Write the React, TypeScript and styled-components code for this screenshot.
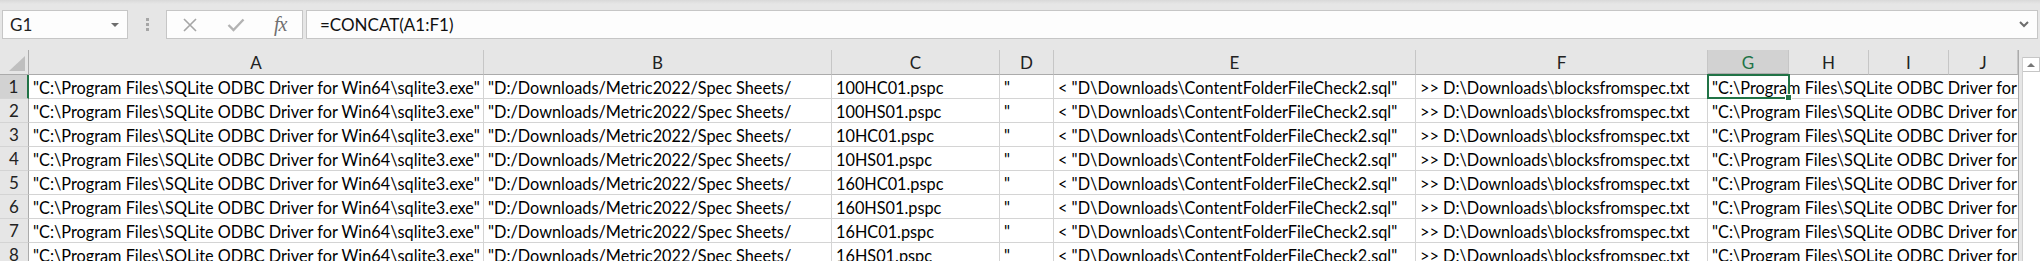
import React from 'react';
import styled, { createGlobalStyle, css } from 'styled-components';

const GlobalStyle = createGlobalStyle`
  html, body {
    margin: 0;
    padding: 0;
    background: #ffffff;
  }
  body {
    font-family: Lato, "Open Sans", "Liberation Sans", sans-serif;
    color: #000;
  }
`;

const FONT = `Lato, "Open Sans", "Liberation Sans", sans-serif`;
const GRID = '#d4d4d4';
const HEADER_LINE = '#ababab';
const HEADER_BG = '#e6e6e6';
const HEADER_SEL = '#d2d2d2';
const GREEN = '#217346';

const Page = styled.div`
  width: 2040px;
  height: 261px;
  overflow: hidden;
  background: ${HEADER_BG};
  font-family: ${FONT};
`;

const FormulaBar = styled.div`
  height: 50px;
  box-sizing: border-box;
  padding: 10px 2px 11px 2px;
  display: flex;
  align-items: stretch;
  background: linear-gradient(to bottom, #d9d9d9 0px, ${HEADER_BG} 4px);
`;

const NameBox = styled.div`
  width: 126px;
  box-sizing: border-box;
  border: 1px solid #c6c6c6;
  background: #fdfdfd;
  display: flex;
  align-items: center;
  justify-content: space-between;
  padding: 0 8px 0 7px;
  font-size: 17px;
  color: #222;
`;

const DropTriangle = styled.span`
  width: 0;
  height: 0;
  border-left: 4px solid transparent;
  border-right: 4px solid transparent;
  border-top: 4px solid #6d6d6d;
`;

const Grip = styled.div`
  width: 38px;
  display: flex;
  flex-direction: column;
  align-items: center;
  justify-content: center;
  gap: 2px;
`;

const GripDot = styled.span`
  width: 3px;
  height: 3px;
  background: #a6a6a6;
`;

const EditButtons = styled.div`
  width: 137px;
  box-sizing: border-box;
  border: 1px solid #c6c6c6;
  background: #fdfdfd;
  display: flex;
  align-items: center;
  padding: 0 0 0 15px;
  gap: 29px;
`;

const FxLabel = styled.span`
  font-family: "Liberation Serif", "DejaVu Serif", serif;
  font-style: italic;
  font-size: 20px;
  color: #707070;
  letter-spacing: -1px;
`;

const FormulaInput = styled.div`
  flex: 1;
  margin-left: 3px;
  box-sizing: border-box;
  border: 1px solid #c6c6c6;
  background: #fdfdfd;
  display: flex;
  align-items: center;
  justify-content: space-between;
  padding: 0 8px 0 13px;
  font-size: 17px;
  color: #111;
`;

const SheetArea = styled.div`
  display: flex;
  align-items: flex-start;
`;

const Sheet = styled.div`
  display: grid;
  grid-template-columns: 29px 455px 348px 168px 54px 362px 292px 81px 80px 80px 69px;
  grid-auto-rows: 24px;
  grid-template-rows: 25px;
  background: #fff;
  border-right: 1px solid ${HEADER_LINE};
`;

const Corner = styled.div`
  background: ${HEADER_BG};
  border-right: 1px solid ${HEADER_LINE};
  border-bottom: 1px solid ${HEADER_LINE};
  box-sizing: border-box;
  display: flex;
  align-items: flex-end;
  justify-content: flex-end;
  padding: 0 3px 3px 0;
`;

const CornerTriangle = styled.span`
  width: 0;
  height: 0;
  border-left: 16px solid transparent;
  border-bottom: 15px solid #bfbfbf;
`;

const ColHeader = styled.div<{ $selected?: boolean }>`
  box-sizing: border-box;
  background: ${HEADER_BG};
  border-right: 1px solid #c6c6c6;
  border-bottom: 1px solid ${HEADER_LINE};
  display: flex;
  align-items: center;
  justify-content: center;
  font-size: 17px;
  color: #222;
  padding-top: 1px;
  ${p =>
    p.$selected &&
    css`
      background: ${HEADER_SEL};
      color: ${GREEN};
      border-bottom: 2px solid ${HEADER_LINE};
    `}
`;

const RowHeader = styled.div<{ $selected?: boolean }>`
  box-sizing: border-box;
  background: ${HEADER_BG};
  border-right: 1px solid ${HEADER_LINE};
  border-bottom: 1px solid ${GRID};
  display: flex;
  align-items: center;
  justify-content: center;
  font-size: 17px;
  color: #222;
  ${p =>
    p.$selected &&
    css`
      background: ${HEADER_SEL};
      border-right: 2px solid ${GREEN};
    `}
`;

const Cell = styled.div<{ $span?: number }>`
  position: relative;
  box-sizing: border-box;
  border-right: 1px solid ${GRID};
  border-bottom: 1px solid ${GRID};
  display: flex;
  align-items: center;
  padding: 1px 0 0 4px;
  font-size: 16.3px;
  white-space: nowrap;
  overflow: hidden;
  ${p =>
    p.$span &&
    css`
      grid-column: span ${p.$span};
      border-right: none;
      overflow: visible;
    `}
`;

const Overflow = styled.div`
  position: absolute;
  inset: 0;
  overflow: hidden;
  display: flex;
  align-items: center;
  padding: 1px 0 0 4px;
`;

const Selection = styled.div`
  position: absolute;
  left: -1px;
  top: -1px;
  width: 83px;
  height: 25px;
  box-sizing: border-box;
  border: 2px solid ${GREEN};
  pointer-events: none;
`;

const FillHandle = styled.span`
  position: absolute;
  right: -4px;
  bottom: -4px;
  width: 5px;
  height: 5px;
  background: ${GREEN};
  border: 1px solid #fff;
`;

const ScrollTrack = styled.div`
  margin-left: 3px;
  width: 18px;
  height: 211px;
  margin-top: 7px;
  background: #fff;
  border-left: 1px solid #d0d0d0;
`;

const ScrollButton = styled.div`
  height: 15px;
  box-sizing: border-box;
  border: 1px solid #c6c6c6;
  border-left: none;
  display: flex;
  align-items: center;
  justify-content: center;
`;

const UpTriangle = styled.span`
  width: 0;
  height: 0;
  border-left: 4px solid transparent;
  border-right: 4px solid transparent;
  border-bottom: 4px solid #777;
`;

const COLS = ['A', 'B', 'C', 'D', 'E', 'F', 'G', 'H', 'I', 'J'];
const FILES = [
  '100HC01.pspc',
  '100HS01.pspc',
  '10HC01.pspc',
  '10HS01.pspc',
  '160HC01.pspc',
  '160HS01.pspc',
  '16HC01.pspc',
  '16HS01.pspc',
];

const EXE = '"C:\\Program Files\\SQLite ODBC Driver for Win64\\sqlite3.exe"';
const DIR = '"D:/Downloads/Metric2022/Spec Sheets/';
const SQL = '< "D\\Downloads\\ContentFolderFileCheck2.sql"';
const OUT = '>> D:\\Downloads\\blocksfromspec.txt';

const App: React.FC = () => {
  return (
    <>
      <GlobalStyle />
      <Page>
        <FormulaBar>
          <NameBox>
            <span>G1</span>
            <DropTriangle />
          </NameBox>
          <Grip>
            <GripDot />
            <GripDot />
            <GripDot />
          </Grip>
          <EditButtons>
            <svg width="16" height="16" viewBox="0 0 16 16">
              <path d="M2 2 L14 14 M14 2 L2 14" stroke="#a6a6a6" strokeWidth="1.6" fill="none" />
            </svg>
            <svg width="18" height="14" viewBox="0 0 18 14">
              <path d="M1.5 7 L6.5 12 L16.5 1.5" stroke="#b3b3b3" strokeWidth="2.4" fill="none" />
            </svg>
            <FxLabel>fx</FxLabel>
          </EditButtons>
          <FormulaInput>
            <span>=CONCAT(A1:F1)</span>
            <svg width="10" height="7" viewBox="0 0 10 7">
              <path d="M1 1 L5 5 L9 1" stroke="#6d6d6d" strokeWidth="2" fill="none" />
            </svg>
          </FormulaInput>
        </FormulaBar>
        <SheetArea>
          <Sheet>
            <Corner>
              <CornerTriangle />
            </Corner>
            {COLS.map(c => (
              <ColHeader key={c} $selected={c === 'G'}>
                {c}
              </ColHeader>
            ))}
            {FILES.map((file, i) => (
              <React.Fragment key={file}>
                <RowHeader $selected={i === 0}>{i + 1}</RowHeader>
                <Cell>{EXE}</Cell>
                <Cell>{DIR}</Cell>
                <Cell>{file}</Cell>
                <Cell>"</Cell>
                <Cell>{SQL}</Cell>
                <Cell>{OUT}</Cell>
                <Cell $span={4}>
                  <Overflow>{EXE}</Overflow>
                  {i === 0 && (
                    <Selection>
                      <FillHandle />
                    </Selection>
                  )}
                </Cell>
              </React.Fragment>
            ))}
          </Sheet>
          <ScrollTrack>
            <ScrollButton>
              <UpTriangle />
            </ScrollButton>
          </ScrollTrack>
        </SheetArea>
      </Page>
    </>
  );
};

export default App;
